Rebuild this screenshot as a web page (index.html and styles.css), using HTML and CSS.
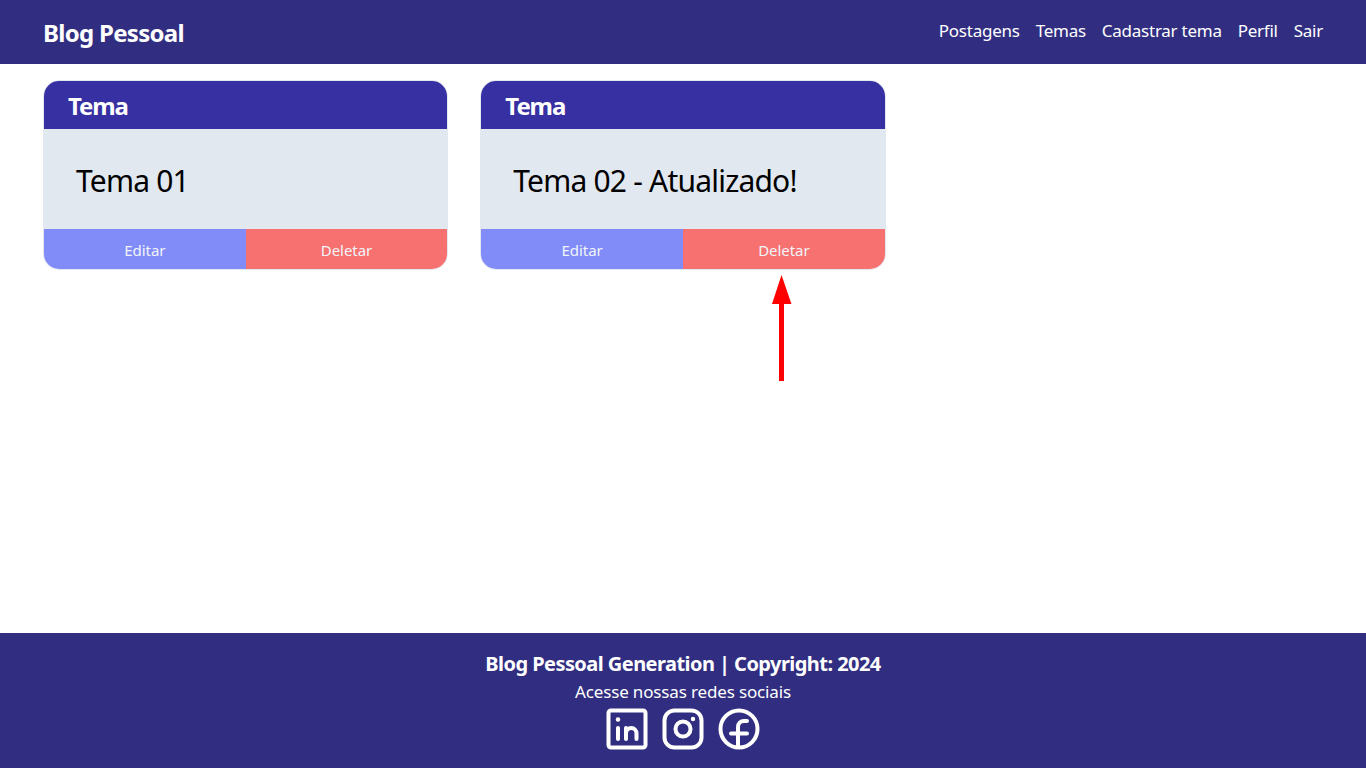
FILE: index.html
```html
<!DOCTYPE html>
<html lang="pt-BR">
<head>
    <meta charset="UTF-8">
    <meta name="viewport" content="width=device-width, initial-scale=1.0">
    <title>Blog Pessoal</title>
    <link rel="stylesheet" href="styles.css">
</head>
<body>
    <header class="navbar">
        <div class="navbar-inner">
            <a class="brand" href="#">Blog Pessoal</a>
            <nav class="nav-links">
                <a href="#">Postagens</a>
                <a href="#">Temas</a>
                <a href="#">Cadastrar tema</a>
                <a href="#">Perfil</a>
                <a href="#">Sair</a>
            </nav>
        </div>
    </header>

    <main class="content">
        <div class="card-grid">
            <div class="card">
                <h2 class="card-title">Tema</h2>
                <p class="card-text">Tema 01</p>
                <div class="card-actions">
                    <a class="btn btn-edit" href="#">Editar</a>
                    <a class="btn btn-delete" href="#">Deletar</a>
                </div>
            </div>
            <div class="card">
                <h2 class="card-title">Tema</h2>
                <p class="card-text">Tema 02 - Atualizado!</p>
                <div class="card-actions">
                    <a class="btn btn-edit" href="#">Editar</a>
                    <a class="btn btn-delete" href="#">Deletar</a>
                </div>
            </div>
        </div>
        <!-- red arrow drawn over the screenshot -->
        <svg class="arrow" width="20" height="107" viewBox="0 0 20 107">
            <path d="M7 28h5v78H7z" fill="#ff0000"/>
            <path d="M9.500 0L19.500 29H0z" fill="#ff0000"/>
        </svg>
    </main>

    <footer class="footer">
        <p class="footer-title">Blog Pessoal Generation | Copyright: 2024</p>
        <p class="footer-sub">Acesse nossas redes sociais</p>
        <div class="social">
            <svg width="48" height="48" viewBox="0 0 48 48" fill="none" stroke="#fff" stroke-width="4" stroke-linecap="round" stroke-linejoin="round">
                <rect x="5.500" y="5.500" width="37" height="37" rx="2.500"/>
                <path d="M15 23v11"/>
                <path d="M23 34V23"/>
                <path d="M23 28.500c0-3.200 2.400-5.500 5.300-5.500s5.200 2.300 5.200 5.500V34"/>
                <circle cx="15" cy="14.500" r="1.300" fill="#fff" stroke-width="2"/>
            </svg>
            <svg width="48" height="48" viewBox="0 0 48 48" fill="none" stroke="#fff" stroke-width="4" stroke-linecap="round" stroke-linejoin="round">
                <rect x="5.500" y="5.500" width="37" height="37" rx="10"/>
                <circle cx="24" cy="24" r="7.500"/>
                <circle cx="34" cy="14" r="1.200" fill="#fff" stroke-width="2"/>
            </svg>
            <svg width="48" height="48" viewBox="0 0 48 48" fill="none" stroke="#fff" stroke-width="4" stroke-linecap="round" stroke-linejoin="round">
                <circle cx="24" cy="24" r="18.500"/>
                <path d="M32 16h-3c-3.500 0-6 2.500-6 6v20"/>
                <path d="M16 28.500h16"/>
            </svg>
        </div>
    </footer>
</body>
</html>
```

FILE: styles.css
```css
* {
    box-sizing: border-box;
}
body {
    margin: 0;
    min-height: 768px;
    display: flex;
    flex-direction: column;
    font-family: "Noto Sans", "Open Sans", sans-serif;
    background-color: #fff;
}
a {
    color: inherit;
    text-decoration: none;
}
.navbar {
    height: 64px;
    background-color: #312e81;
    color: #fff;
}
.navbar-inner {
    width: 1280px;
    height: 100%;
    margin: 0 auto;
    display: flex;
    justify-content: space-between;
    align-items: center;
}
.brand {
    font-size: 24px;
    font-weight: 700;
    letter-spacing: -0.7px;
}
.nav-links {
    display: flex;
    gap: 16px;
    font-size: 17px;
    letter-spacing: -0.25px;
    margin-top: -4px;
}
.content {
    position: relative;
    flex: 1;
    padding-top: 16px;
}
.card-grid {
    width: 1280px;
    margin: 0 auto;
    display: grid;
    grid-template-columns: repeat(3, 1fr);
    gap: 32px;
}
.card {
    height: 190px;
    display: flex;
    flex-direction: column;
    border: 1px solid #e2e8f0;
    border-radius: 16px;
    overflow: hidden;
}
.card-title {
    margin: 0;
    height: 48px;
    padding: 0 24px;
    line-height: 50px;
    font-size: 24px;
    font-weight: 700;
    letter-spacing: -1.1px;
    color: #fff;
    background-color: #3730a3;
}
.card-text {
    margin: 0;
    height: 100px;
    padding: 0 32px;
    line-height: 103px;
    font-size: 30px;
    letter-spacing: -0.8px;
    color: #000;
    background-color: #e2e8f0;
}
.card-actions {
    flex: 1;
    display: flex;
}
.btn {
    flex: 1;
    display: flex;
    align-items: center;
    justify-content: center;
    padding-top: 2px;
    font-size: 15px;
    letter-spacing: -0.05px;
    color: #f1f5f9;
}
.btn-edit {
    background-color: #818cf8;
}
.btn-delete {
    background-color: #f87171;
}
.arrow {
    position: absolute;
    left: 772px;
    top: 211px;
}
.footer {
    height: 135px;
    padding-top: 17px;
    display: flex;
    flex-direction: column;
    align-items: center;
    background-color: #312e81;
    color: #fff;
}
.footer-title {
    margin: 0;
    font-size: 20px;
    line-height: 28px;
    font-weight: 700;
    letter-spacing: -0.55px;
}
.footer-sub {
    margin: 0;
    font-size: 17px;
    line-height: 28px;
    letter-spacing: -0.15px;
}
.social {
    display: flex;
    gap: 8px;
    margin-top: -1px;
}
```
